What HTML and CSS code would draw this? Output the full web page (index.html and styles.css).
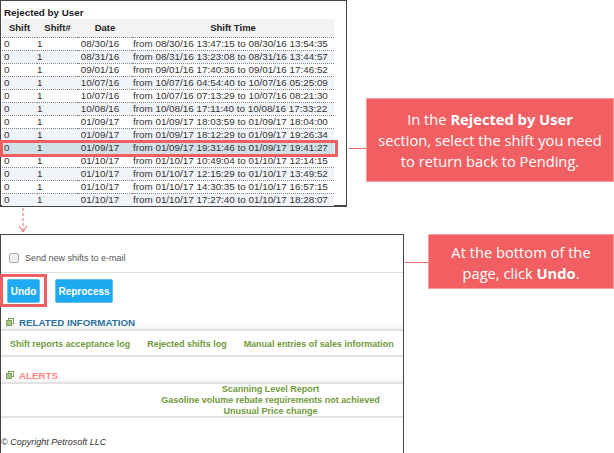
FILE: index.html
```html
<!DOCTYPE html>
<html lang="en">
<head>
<meta charset="utf-8">
<title>Rejected by User</title>
<link rel="stylesheet" href="styles.css">
</head>
<body>
<div class="canvas">
  <section class="panel panel-top">
    <h2 class="panel-title">Rejected by User</h2>
    <table class="shifts">
      <colgroup><col class="c1"><col class="c2"><col class="c3"><col class="c4"></colgroup>
      <thead><tr><th>Shift</th><th>Shift#</th><th>Date</th><th>Shift Time</th></tr></thead>
      <tbody>
        <tr><td>0</td><td class="num">1</td><td class="date">08/30/16</td><td>from 08/30/16 13:47:15 to 08/30/16 13:54:35</td></tr>
        <tr class="alt"><td>0</td><td class="num">1</td><td class="date">08/31/16</td><td>from 08/31/16 13:23:08 to 08/31/16 13:44:57</td></tr>
        <tr><td>0</td><td class="num">1</td><td class="date">09/01/16</td><td>from 09/01/16 17:40:36 to 09/01/16 17:46:52</td></tr>
        <tr class="alt"><td>0</td><td class="num">1</td><td class="date">10/07/16</td><td>from 10/07/16 04:54:40 to 10/07/16 05:25:09</td></tr>
        <tr><td>0</td><td class="num">1</td><td class="date">10/07/16</td><td>from 10/07/16 07:13:29 to 10/07/16 08:21:30</td></tr>
        <tr class="alt"><td>0</td><td class="num">1</td><td class="date">10/08/16</td><td>from 10/08/16 17:11:40 to 10/08/16 17:33:22</td></tr>
        <tr><td>0</td><td class="num">1</td><td class="date">01/09/17</td><td>from 01/09/17 18:03:59 to 01/09/17 18:04:00</td></tr>
        <tr class="alt"><td>0</td><td class="num">1</td><td class="date">01/09/17</td><td>from 01/09/17 18:12:29 to 01/09/17 19:26:34</td></tr>
        <tr class="selected"><td>0</td><td class="num">1</td><td class="date">01/09/17</td><td>from 01/09/17 19:31:46 to 01/09/17 19:41:27</td></tr>
        <tr><td>0</td><td class="num">1</td><td class="date">01/10/17</td><td>from 01/10/17 10:49:04 to 01/10/17 12:14:15</td></tr>
        <tr class="alt"><td>0</td><td class="num">1</td><td class="date">01/10/17</td><td>from 01/10/17 12:15:29 to 01/10/17 13:49:52</td></tr>
        <tr><td>0</td><td class="num">1</td><td class="date">01/10/17</td><td>from 01/10/17 14:30:35 to 01/10/17 16:57:15</td></tr>
        <tr class="alt"><td>0</td><td class="num">1</td><td class="date">01/10/17</td><td>from 01/10/17 17:27:40 to 01/10/17 18:28:07</td></tr>
      </tbody>
    </table>
  </section>
  <div class="row-mark"></div>

  <svg class="arrow" width="12" height="26" viewBox="0 0 12 26" aria-hidden="true">
    <path d="M6 0V23" fill="none" stroke="#e8686a" stroke-width="1" stroke-dasharray="3 2"/>
    <path d="M2 18L6 24L10 18" fill="none" stroke="#e8686a" stroke-width="1"/>
  </svg>

  <section class="panel panel-bottom">
    <label class="send"><span class="check"></span>Send new shifts to e-mail</label>
    <div class="actions">
      <button class="btn btn-undo">Undo</button>
      <button class="btn btn-reprocess">Reprocess</button>
    </div>
    <h3 class="section-head related">
      <svg class="stack" width="8" height="8" viewBox="0 0 8 8" aria-hidden="true"><rect x="2.5" y="0.5" width="5" height="5" fill="#fff" stroke="#7da35a"/><rect x="0.5" y="2.5" width="5" height="5" fill="#a9c68c" stroke="#7da35a"/></svg>
      RELATED INFORMATION
    </h3>
    <div class="links">
      <a>Shift reports acceptance log</a>
      <a>Rejected shifts log</a>
      <a>Manual entries of sales information</a>
    </div>
    <h3 class="section-head alerts">
      <svg class="stack" width="8" height="8" viewBox="0 0 8 8" aria-hidden="true"><rect x="2.5" y="0.5" width="5" height="5" fill="#fff" stroke="#7da35a"/><rect x="0.5" y="2.5" width="5" height="5" fill="#a9c68c" stroke="#7da35a"/></svg>
      ALERTS
    </h3>
    <div class="alert-list">
      <a>Scanning Level Report</a>
      <a>Gasoline volume rebate requirements not achieved</a>
      <a>Unusual Price change</a>
    </div>
    <p class="copyright">© Copyright Petrosoft LLC</p>
  </section>
  <div class="undo-mark"></div>

  <div class="connector conn-one"></div>
  <aside class="callout callout-one">In the <b>Rejected by User</b><br>section, select the shift you need<br>to return back to Pending.</aside>
  <div class="connector conn-two"></div>
  <aside class="callout callout-two">At the bottom of the<br>page, click <b>Undo</b>.</aside>
</div>
</body>
</html>
```
FILE: styles.css
```css
* { box-sizing: border-box; }
html, body { margin: 0; padding: 0; background: #fff; }
.canvas {
  position: relative;
  width: 614px;
  height: 453px;
  overflow: hidden;
  font-family: "Liberation Sans", Arial, sans-serif;
}
.panel {
  position: absolute;
  left: 0;
  background: #fff;
  border: 1px solid #444;
}
.panel-top {
  top: 0;
  width: 347px;
  height: 207px;
  padding: 6px 0 0 1px;
  border-width: 1px 1px 2px 1px;
}
.panel-title {
  margin: 0 0 0 2px;
  font-size: 9.8px;
  line-height: 12px;
  font-weight: bold;
  color: #222;
}
.shifts {
  width: 332px;
  table-layout: fixed;
  border-collapse: collapse;
  font-size: 9.85px;
  color: #333;
}
.c1 { width: 35px; }
.c2 { width: 41px; }
.c3 { width: 54px; }
.c4 { width: 202px; }
.shifts th {
  height: 18px;
  padding: 0;
  background: #f3f3f3;
  font-size: 9.5px;
  font-weight: bold;
  color: #222;
  text-align: center;
}
.shifts td {
  height: 13px;
  padding: 0 0 0 2px;
  line-height: 12px;
  border-top: 1px dotted #888;
  white-space: nowrap;
}
.shifts .num { padding-left: 0; }
.shifts .date { text-align: center; padding: 0 10px 0 0; }
.shifts td:last-child { padding-left: 1px; }
.alt td { background: #f1f5f9; }
.selected td { background: #d2e0e8; }
.row-mark {
  position: absolute;
  left: 0;
  top: 140px;
  width: 338px;
  height: 17px;
  border: 3px solid #f15f62;
}
.arrow { position: absolute; left: 17px; top: 208px; }
.panel-bottom {
  top: 234px;
  width: 404px;
  height: 219px;
  padding: 0;
  border-width: 1px 1px 0 1px;
}
.send {
  display: flex;
  align-items: center;
  height: 38px;
  padding: 9px 0 0 8px;
  font-size: 9px;
  color: #555;
  border-bottom: 1px solid #dedede;
}
.check {
  width: 10px;
  height: 10px;
  margin-right: 6px;
  background: #eee;
  border: 1px solid #aaa;
  border-radius: 2px;
}
.actions {
  display: flex;
  gap: 15px;
  height: 30px;
  padding: 6px 0 0 6px;
}
.btn {
  height: 24px;
  padding: 0;
  background: #1eaaf1;
  border: 1px solid #5cc2f5;
  border-radius: 2px;
  color: #fff;
  font: bold 10px "Liberation Sans", Arial, sans-serif;
}
.btn-undo { width: 33px; }
.btn-reprocess { width: 58px; }
.undo-mark {
  position: absolute;
  left: 0;
  top: 274px;
  width: 47px;
  height: 33px;
  border: 3px solid #f15f62;
}
.section-head {
  display: flex;
  align-items: center;
  gap: 5px;
  height: 19px;
  margin: 0;
  padding: 3px 0 0 5px;
  font-size: 9.75px;
  font-weight: bold;
  border-bottom: 2px solid #e2e2e2;
  background: linear-gradient(#fff, #fff 60%, #f6f6f6);
}
.related { margin-top: 9px; color: #2a6f9e; }
.alerts { margin-top: 8px; color: #ff8585; }
.links {
  display: flex;
  height: 26px;
  align-items: center;
  gap: 17px;
  padding: 2px 0 0 9px;
  font-size: 8.95px;
  font-weight: bold;
  color: #6f9a3a;
  border-bottom: 2px solid #e2e2e2;
}
.alert-list {
  display: flex;
  flex-direction: column;
  align-items: center;
  height: 34px;
  padding-left: 137px;
  font-size: 9px;
  line-height: 11px;
  font-weight: bold;
  color: #6f9a3a;
  border-bottom: 2px solid #e2e2e2;
}
.copyright {
  margin: 19px 0 0 0;
  font-size: 9px;
  line-height: 10px;
  font-style: italic;
  color: #333;
}
.connector { position: absolute; height: 1px; background: #e8686a; }
.conn-one { left: 349px; top: 148px; width: 17px; }
.conn-two { left: 405px; top: 262px; width: 23px; }
.callout {
  position: absolute;
  text-align: center;
  background: #f15f62;
  border: 1px solid #f89c9c;
  color: #fff;
  font-family: "Open Sans", sans-serif;
  font-size: 14.7px;
  line-height: 21px;
  white-space: nowrap;
}
.callout-one { left: 366px; top: 98px; width: 248px; height: 84px; padding-top: 10px; }
.callout-two { left: 428px; top: 234px; width: 186px; height: 55px; padding-top: 7px; }
```
